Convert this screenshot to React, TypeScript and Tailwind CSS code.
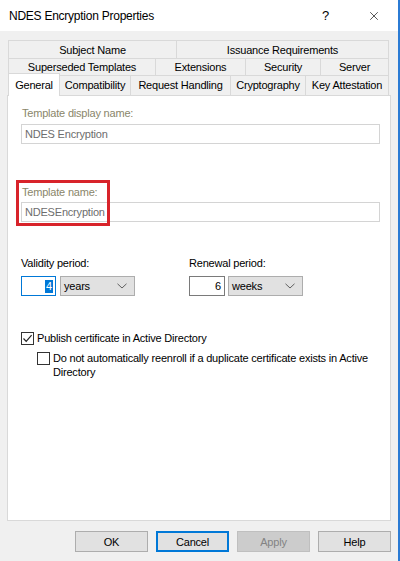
import { X } from 'lucide-react';

// Tab rows of the property sheet, widths taken from the dialog
const tabRows: { label: string; w: string }[][] = [
  [
    { label: 'Subject Name', w: 'w-[168px]' },
    { label: 'Issuance Requirements', w: 'flex-1' },
  ],
  [
    { label: 'Superseded Templates', w: 'w-[147px]' },
    { label: 'Extensions', w: 'w-[90px]' },
    { label: 'Security', w: 'w-[75px]' },
    { label: 'Server', w: 'flex-1' },
  ],
];

const frontTabs = [
  { label: 'Compatibility', w: 'w-[70px]' },
  { label: 'Request Handling', w: 'w-[100px]' },
  { label: 'Cryptography', w: 'w-[75px]' },
  { label: 'Key Attestation', w: 'flex-1' },
];

function Chevron() {
  return (
    <svg width="10" height="6" viewBox="0 0 10 6" className="shrink-0">
      <path d="M0.5 0.8 L5 5 L9.5 0.8" fill="none" stroke="#606060" strokeWidth="1" />
    </svg>
  );
}

function Check() {
  return (
    <svg width="11" height="11" viewBox="0 0 11 11">
      <path d="M1.5 5.5 L4.2 8.3 L9.6 2.2" fill="none" stroke="#222" strokeWidth="1.2" />
    </svg>
  );
}

function Dropdown({ value }: { value: string }) {
  return (
    <div className="w-[75px] h-[20px] bg-[#e1e1e1] border border-[#adadad] flex items-center justify-between pl-[3px] pr-[7px]">
      <span>{value}</span>
      <Chevron />
    </div>
  );
}

export default function App() {
  return (
    <div
      className="w-[400px] h-[561px] bg-[#f0f0f0] border-r-2 border-[#2b7bd4] text-[11px] tracking-[-0.2px] text-black leading-[14px] overflow-hidden"
      style={{ fontFamily: '"Liberation Sans", Arial, sans-serif' }}
    >
      {/* Title bar */}
      <div className="h-[31px] bg-white flex items-center pl-[9px] pr-[17px]">
        <span className="text-[12px] tracking-[-0.25px] flex-1">NDES Encryption Properties</span>
        <span className="text-[13px] mr-[38px]">?</span>
        <X className="w-[14px] h-[14px] text-[#222]" strokeWidth={1.3} />
      </div>

      <div className="pt-[9px] pl-[7px] pr-[7px]">
        {/* Back tab rows */}
        <div className="ml-[1px] mr-[2px]">
          {tabRows.map((row, i) => (
            <div key={i} className={`flex border-t border-[#d9d9d9] ${i === 0 ? 'h-[18px]' : 'h-[17px]'}`}>
              {row.map((t, j) => (
                <div
                  key={t.label}
                  className={`${t.w} border-l border-[#d9d9d9] flex items-center justify-center ${j === row.length - 1 ? 'border-r' : ''}`}
                >
                  {t.label}
                </div>
              ))}
            </div>
          ))}
          {/* Front row */}
          <div className="flex items-end h-[20px] border-t border-[#d9d9d9]">
            <div className="w-[52px] h-[23px] -mt-[2px] -mb-[1px] bg-white border-l border-r border-t border-[#d9d9d9] relative z-10 flex items-center justify-center pb-[1px]">
              General
            </div>
            {frontTabs.map((t, j) => (
              <div
                key={t.label}
                className={`${t.w} h-[20px] flex items-center justify-center border-[#d9d9d9] ${j === frontTabs.length - 1 ? 'border-r' : ''} ${j === 0 ? '' : 'border-l'}`}
              >
                {t.label}
              </div>
            ))}
          </div>
        </div>

        {/* Tab page */}
        <div className="relative h-[426px] bg-white border border-[#d9d9d9] pt-[10px] pl-[13px] pr-[10px]">
          <div className="ml-[1px] h-[14px] text-[#8a866a]">Template display name:</div>
          <div className="mt-[4px] h-[20px] border border-[#d4d4d4] flex items-center pl-[3px] text-[#6d6d6d]">
            NDES Encryption
          </div>

          <div className="mt-[41px] ml-[1px] h-[14px] text-[#8a866a]">Template name:</div>
          <div className="mt-[3px] h-[20px] border border-[#d4d4d4] flex items-center pl-[3px] text-[#6d6d6d]">
            NDESEncryption
          </div>

          {/* Periods */}
          <div className="mt-[34px] flex">
            <div className="w-[168px]">
              <div className="h-[14px]">Validity period:</div>
              <div className="mt-[6px] flex gap-[4px]">
                <div className="w-[35px] h-[20px] border border-[#0078d7] flex items-center justify-end pr-[2px]">
                  <span className="bg-[#0078d7] text-white px-[1px] leading-[13px]">4</span>
                </div>
                <Dropdown value="years" />
              </div>
            </div>
            <div>
              <div className="h-[14px]">Renewal period:</div>
              <div className="mt-[6px] flex gap-[3px]">
                <div className="w-[36px] h-[20px] border border-[#7a7a7a] flex items-center justify-end pr-[3px]">
                  6
                </div>
                <Dropdown value="weeks" />
              </div>
            </div>
          </div>

          {/* Checkboxes */}
          <div className="mt-[35px] flex items-center gap-[3px] h-[14px]">
            <div className="w-[13px] h-[13px] border border-[#333] bg-white flex items-center justify-center">
              <Check />
            </div>
            <span>Publish certificate in Active Directory</span>
          </div>
          <div className="mt-[6px] ml-[16px] flex items-start gap-[3px]">
            <div className="w-[13px] h-[13px] mt-[1px] border border-[#333] bg-white shrink-0" />
            <span className="leading-[14px]">
              Do not automatically reenroll if a duplicate certificate exists in Active
              <br />
              Directory
            </span>
          </div>

          {/* Highlight annotation over the template name */}
          <div className="absolute left-[8px] top-[84px] w-[94px] h-[46px] border-[3px] border-[#d8232a]" />
        </div>

        {/* Buttons */}
        <div className="mt-[10px] flex justify-end gap-[8px]">
          <button className="w-[73px] h-[21px] bg-[#e1e1e1] border border-[#adadad]">OK</button>
          <button className="w-[73px] h-[21px] bg-[#e1e1e1] border-2 border-[#0078d7]">Cancel</button>
          <button className="w-[73px] h-[21px] bg-[#cccccc] border border-[#bfbfbf] text-[#838383]">Apply</button>
          <button className="w-[73px] h-[21px] bg-[#e1e1e1] border border-[#adadad]">Help</button>
        </div>
      </div>
    </div>
  );
}
